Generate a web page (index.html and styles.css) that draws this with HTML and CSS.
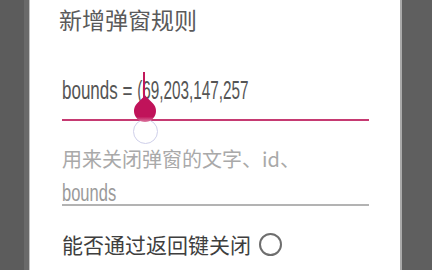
FILE: index.html
```html
<!DOCTYPE html>
<html lang="zh-CN">
<head>
<meta charset="utf-8">
<title>新增弹窗规则</title>
<link rel="stylesheet" href="styles.css">
</head>
<body>
<div class="gutter-left"><div class="gutter-edge"></div></div>
<div class="dialog">
  <div class="title">新增弹窗规则</div>
  <div class="field field-active">
    <div class="input-line"><span class="lat lat-a">bounds = </span><span class="lat lat-b">(69,203,147,257</span></div>
    <div class="cursor-bar"></div>
    <div class="handle-ghost"></div>
    <div class="handle"></div>
  </div>
  <div class="field field-hint">
    <div class="hint-cjk">用来关闭弹窗的文字、id、</div>
    <div class="hint-lat"><span class="lat lat-c">bounds</span></div>
  </div>
  <div class="option-row">
    <span class="option-label">能否通过返回键关闭</span>
    <span class="radio"></span>
  </div>
</div>
<div class="gutter-right"></div>
</body>
</html>
```

FILE: styles.css
```css
html, body {
  margin: 0;
  padding: 0;
}
body {
  width: 432px;
  height: 270px;
  overflow: hidden;
  display: flex;
  background: #5e5e5e;
  font-family: "Noto Sans CJK SC", "Noto Sans", sans-serif;
}
.gutter-left {
  width: 24px;
  background: #5c5c5c;
  display: flex;
  justify-content: flex-end;
}
.gutter-edge {
  width: 5px;
  margin-right: -6px;
  background: #6a6a6a;
  border-right: 1px solid #c4c4c4;
}
.dialog {
  width: 370px;
  margin-left: 6px;
  box-sizing: border-box;
  padding: 0 31px 0 32px;
  background: #ffffff;
  display: flex;
  flex-direction: column;
}
.gutter-right {
  width: 30px;
  background: #5f5f5f;
  border-left: 2px solid #a9a9a9;
}
.title {
  margin: 6px 0 0 -3px;
  font-size: 23px;
  line-height: 26px;
  color: #5a5a5a;
  white-space: nowrap;
}
.field {
  position: relative;
}
.field-active {
  margin-top: 45px;
  padding-bottom: 12px;
  border-bottom: 2px solid #c63a72;
}
.input-line {
  line-height: 30px;
  height: 30px;
  white-space: nowrap;
  color: #555555;
}
.lat {
  display: inline-block;
  font-family: "Liberation Sans", Arial, sans-serif;
  line-height: 1;
  white-space: pre;
  transform-origin: 0 0.847em;
}
.lat-a {
  font-size: 17px;
  transform: scaleY(1.53);
}
.lat-b {
  font-size: 15.3px;
  transform: scaleY(1.64);
}
.lat-c {
  font-size: 16.5px;
  transform: scaleY(1.4);
}
.cursor-bar {
  position: absolute;
  left: 81px;
  top: -5px;
  width: 2px;
  height: 33px;
  background: #c2185b;
}
.handle-ghost {
  position: absolute;
  left: 71px;
  top: 42px;
  width: 25px;
  height: 25px;
  box-sizing: border-box;
  border: 1.5px solid #cfd0ea;
  border-radius: 50%;
}
.handle {
  position: absolute;
  left: 72px;
  top: 23px;
  width: 22px;
  height: 22px;
  border-radius: 0 50% 50% 50%;
  transform: rotate(45deg);
  background: linear-gradient(135deg, #c0135a 0%, #c0135a 68%, #e8a3bf 92%, #f6d6e3 100%);
}
.field-hint {
  padding-top: 28px;
  border-bottom: 2px solid #b3b3b3;
  color: #a9a9a9;
}
.hint-cjk {
  font-size: 20px;
  line-height: 20px;
  white-space: nowrap;
}
.hint-lat {
  margin-top: 15px;
  line-height: 20px;
  height: 20px;
  color: #9a9a9a;
}
.option-row {
  margin-top: 26px;
  display: flex;
  align-items: center;
  gap: 8px;
}
.option-label {
  font-size: 21px;
  line-height: 24px;
  color: #3e3e3e;
  white-space: nowrap;
}
.radio {
  width: 23px;
  height: 23px;
  box-sizing: border-box;
  border: 2px solid #6e6e6e;
  border-radius: 50%;
}
```
